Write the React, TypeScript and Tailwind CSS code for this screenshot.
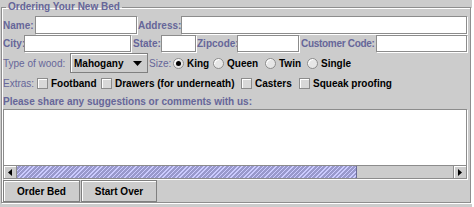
import React from 'react';

const font = 'font-["Liberation_Sans",Arial,sans-serif] text-[10px]';

const Label: React.FC<{ w: string; bold?: boolean; children: React.ReactNode }> = ({ w, bold = true, children }) => (
  <span className={`${w} shrink-0 whitespace-nowrap text-[#666699] ${bold ? 'font-bold' : 'font-normal'}`}>{children}</span>
);

const Field: React.FC<{ w?: string }> = ({ w = 'flex-1' }) => (
  <input
    type="text"
    className={`${w} min-w-0 h-full bg-white border border-[#8c8c8c] shadow-[1px_1px_0_#ffffff] outline-none`}
  />
);

const Radio: React.FC<{ w: string; label: string; checked?: boolean }> = ({ w, label, checked }) => (
  <span className={`${w} shrink-0 flex items-center`}>
    <span className="w-[11px] h-[11px] rounded-full border border-[#8c8c8c] bg-[#e6e6e6] flex items-center justify-center shadow-[inset_1px_1px_0_#ffffff]">
      {checked && <span className="w-[5px] h-[5px] rounded-full bg-black" />}
    </span>
    <span className="ml-[3px] font-bold text-black whitespace-nowrap">{label}</span>
  </span>
);

const Check: React.FC<{ w: string; label: string }> = ({ w, label }) => (
  <span className={`${w} shrink-0 flex items-center`}>
    <span className="w-[11px] h-[11px] border border-[#8c8c8c] bg-[#d8d8d8] shadow-[inset_1px_1px_0_#ffffff]" />
    <span className="ml-[3px] font-bold text-black whitespace-nowrap">{label}</span>
  </span>
);

const Button: React.FC<{ w: string; children: React.ReactNode }> = ({ w, children }) => (
  <button className={`${w} h-full bg-[#cccccc] border border-[#7f7f7f] shadow-[inset_1px_1px_0_#ffffff] font-bold text-black`}>
    {children}
  </button>
);

export default function App() {
  return (
    <div className={`w-[474px] h-[207px] bg-[#cccccc] pl-[1px] pt-[1px] border-r-2 border-white overflow-hidden ${font}`}>
      <fieldset className="w-[470px] min-w-0 h-[202px] border border-[#8e8e8e] shadow-[inset_1px_1px_0_#ffffff,1px_1px_0_#ffffff] pl-[1px] pr-[3px] pt-[3px] flex flex-col">
        <legend className="ml-[3px] px-[2px] leading-[12px] font-bold text-[#666699]">Ordering Your New Bed</legend>

        <div className="flex items-center h-[18px]">
          <Label w="w-[32px]">Name:</Label>
          <Field w="w-[102px]" />
          <Label w="w-[44px] pl-[1px]">Address:</Label>
          <Field />
        </div>

        <div className="flex items-center h-[17px] mt-[1px]">
          <Label w="w-[21px]">City:</Label>
          <Field w="w-[107px]" />
          <Label w="w-[30px] pl-[2px]">State:</Label>
          <Field w="w-[35px]" />
          <Label w="w-[41px] pl-[1px]">Zipcode:</Label>
          <Field w="w-[62px]" />
          <Label w="w-[77px] pl-[2px] tracking-[-0.3px]">Customer Code:</Label>
          <Field />
        </div>

        <div className="flex items-center h-[20px] mt-[1px]">
          <Label w="w-[67px]" bold={false}>Type of wood:</Label>
          <div className="w-[78px] h-full shrink-0 flex items-center justify-between pl-[3px] pr-[5px] bg-[#cccccc] border border-[#7f7f7f] shadow-[inset_1px_1px_0_#ffffff]">
            <span className="font-bold text-black">Mahogany</span>
            <svg width="9" height="5" viewBox="0 0 9 5">
              <path d="M0 0h9L4.5 5z" fill="#000" />
            </svg>
          </div>
          <Label w="w-[25px] pl-[1px]" bold={false}>Size:</Label>
          <Radio w="w-[40px]" label="King" checked />
          <Radio w="w-[52px]" label="Queen" />
          <Radio w="w-[42px]" label="Twin" />
          <Radio w="w-[60px]" label="Single" />
        </div>

        <div className="flex items-center h-[21px]">
          <Label w="w-[34px]" bold={false}>Extras:</Label>
          <Check w="w-[64px]" label="Footband" />
          <Check w="w-[140px]" label="Drawers (for underneath)" />
          <Check w="w-[58px]" label="Casters" />
          <Check w="w-[100px]" label="Squeak proofing" />
        </div>

        <div className="flex items-center h-[14px]">
          <Label w="w-auto">Please share any suggestions or comments with us:</Label>
        </div>

        <div className="h-[70px] mt-[1px] flex flex-col bg-white border border-[#8c8c8c] shadow-[1px_1px_0_#ffffff]">
          <textarea className="flex-1 min-h-0 resize-none outline-none bg-white" />
          <div className="h-[13px] shrink-0 flex border-t border-[#8c8c8c] bg-[#cccccc]">
            <div className="w-[13px] h-full flex items-center justify-center border-r border-[#8c8c8c] shadow-[inset_1px_1px_0_#ffffff]">
              <svg width="4" height="7" viewBox="0 0 4 7">
                <path d="M4 0v7L0 3.5z" fill="#000" />
              </svg>
            </div>
            <div className="w-[340px] h-full border-r border-[#6b6b99] bg-[repeating-linear-gradient(135deg,#ccccff_0px,#ccccff_1px,#9999cc_1px,#9999cc_3px)]" />
            <div className="flex-1 h-full" />
            <div className="w-[13px] h-full flex items-center justify-center border-l border-[#8c8c8c] shadow-[inset_1px_1px_0_#ffffff]">
              <svg width="4" height="7" viewBox="0 0 4 7">
                <path d="M0 0v7L4 3.5z" fill="#000" />
              </svg>
            </div>
          </div>
        </div>

        <div className="flex h-[22px] mt-[1px] gap-[1px]">
          <Button w="w-[77px]">Order Bed</Button>
          <Button w="w-[76px]">Start Over</Button>
        </div>
      </fieldset>
    </div>
  );
}
